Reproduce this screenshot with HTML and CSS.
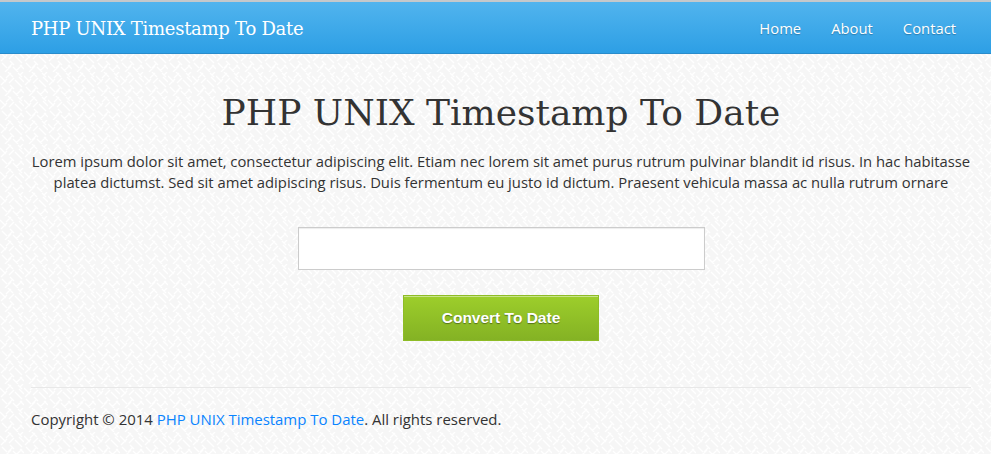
FILE: index.html
```html
<!DOCTYPE html>
<html lang="en">
<head>
    <meta charset="UTF-8">
    <meta name="viewport" content="width=device-width, initial-scale=1.0">
    <title>PHP UNIX Timestamp To Date</title>
    <link rel="stylesheet" href="styles.css">
</head>
<body>
    <nav class="navbar">
        <a class="brand" href="#">PHP UNIX Timestamp To Date</a>
        <ul class="nav-links">
            <li><a href="#">Home</a></li>
            <li><a href="#">About</a></li>
            <li><a href="#">Contact</a></li>
        </ul>
    </nav>

    <div class="container">
        <main class="converter">
            <h1>PHP UNIX Timestamp To Date</h1>
            <p class="lead">Lorem ipsum dolor sit amet, consectetur adipiscing elit. Etiam nec lorem sit amet purus rutrum pulvinar blandit id risus. In hac habitasse platea dictumst. Sed sit amet adipiscing risus. Duis fermentum eu justo id dictum. Praesent vehicula massa ac nulla rutrum ornare</p>
            <form class="convert-form" onsubmit="return false">
                <input class="timestamp-input" type="text" aria-label="Timestamp">
                <button class="convert-btn" type="submit">Convert To Date</button>
            </form>
        </main>

        <footer class="footer">
            <p>Copyright © 2014 <a href="#">PHP UNIX Timestamp To Date</a>. All rights reserved.</p>
        </footer>
    </div>
</body>
</html>
```

FILE: styles.css
```css
* {
    margin: 0;
    padding: 0;
    box-sizing: border-box;
}

body {
    font-family: "Open Sans", sans-serif;
    font-size: 14.8px;
    color: #333;
    background-color: #f6f6f6;
    background-image: url("data:image/svg+xml,%3Csvg xmlns='http://www.w3.org/2000/svg' width='24' height='24'%3E%3Cpath d='M0 4l6 6M8 0l5 5M15 8l7 7M2 15l5 5M10 13l4 4M18 1l4 4M13 19l5 5M20 17l4 4M24 10l-5-5M6 6l5-5M1 13l6-6M9 11l5-5M16 23l6-6M5 24l6-6M12 16l-4 4M20 3l3-3' fill='none' stroke='%23fff' stroke-width='1.3'/%3E%3C/svg%3E");
    min-height: 100vh;
}

.navbar {
    height: 54px;
    display: flex;
    align-items: center;
    justify-content: space-between;
    padding: 2px 20px 0 31px;
    background: linear-gradient(to bottom, #51b4ee 0%, #2d9fe5 100%);
    border-top: 2px solid #c4c8cb;
    border-bottom: 1px solid #2a8ccb;
}

.brand {
    font-family: "DejaVu Serif", serif;
    font-size: 18px;
    letter-spacing: -0.27px;
    color: #fff;
    text-decoration: none;
}

.nav-links {
    display: flex;
    list-style: none;
    margin-bottom: 2px;
}

.nav-links a {
    display: block;
    padding: 0 15px;
    color: #fff;
    text-decoration: none;
    text-shadow: 0 1px 1px rgba(0,0,0,0.25);
}

.container {
    padding: 0 20px 0 31px;
}

.converter {
    display: flex;
    flex-direction: column;
    align-items: center;
    padding-top: 34px;
}

h1 {
    font-family: "DejaVu Serif", serif;
    font-size: 36px;
    font-weight: 400;
    line-height: 50px;
    color: #333;
    margin-bottom: 13px;
}

.lead {
    line-height: 21px;
    text-align: center;
}

.convert-form {
    display: flex;
    flex-direction: column;
    align-items: center;
    margin-top: 34px;
}

.timestamp-input {
    width: 407px;
    height: 43px;
    background: #fff;
    border: 1px solid #ccc;
    box-shadow: inset 0 1px 1px rgba(0,0,0,0.075);
}

.convert-btn {
    width: 196px;
    height: 46px;
    margin-top: 25px;
    font-family: "Liberation Sans", Arial, sans-serif;
    font-size: 15.5px;
    font-weight: 700;
    color: #fff;
    text-shadow: 0 1px 1px rgba(0,0,0,0.4);
    background: linear-gradient(to bottom, #9dce2b 0%, #84b224 100%);
    border: 1px solid #8ebc26;
    box-shadow: inset 0 1px 0 rgba(255,255,255,0.45);
    cursor: pointer;
}

.footer {
    margin-top: 46px;
    border-top: 1px solid #e8e8e8;
    padding-top: 21px;
    font-size: 14.95px;
}

.footer a {
    color: #0a84ff;
    text-decoration: none;
}
```
